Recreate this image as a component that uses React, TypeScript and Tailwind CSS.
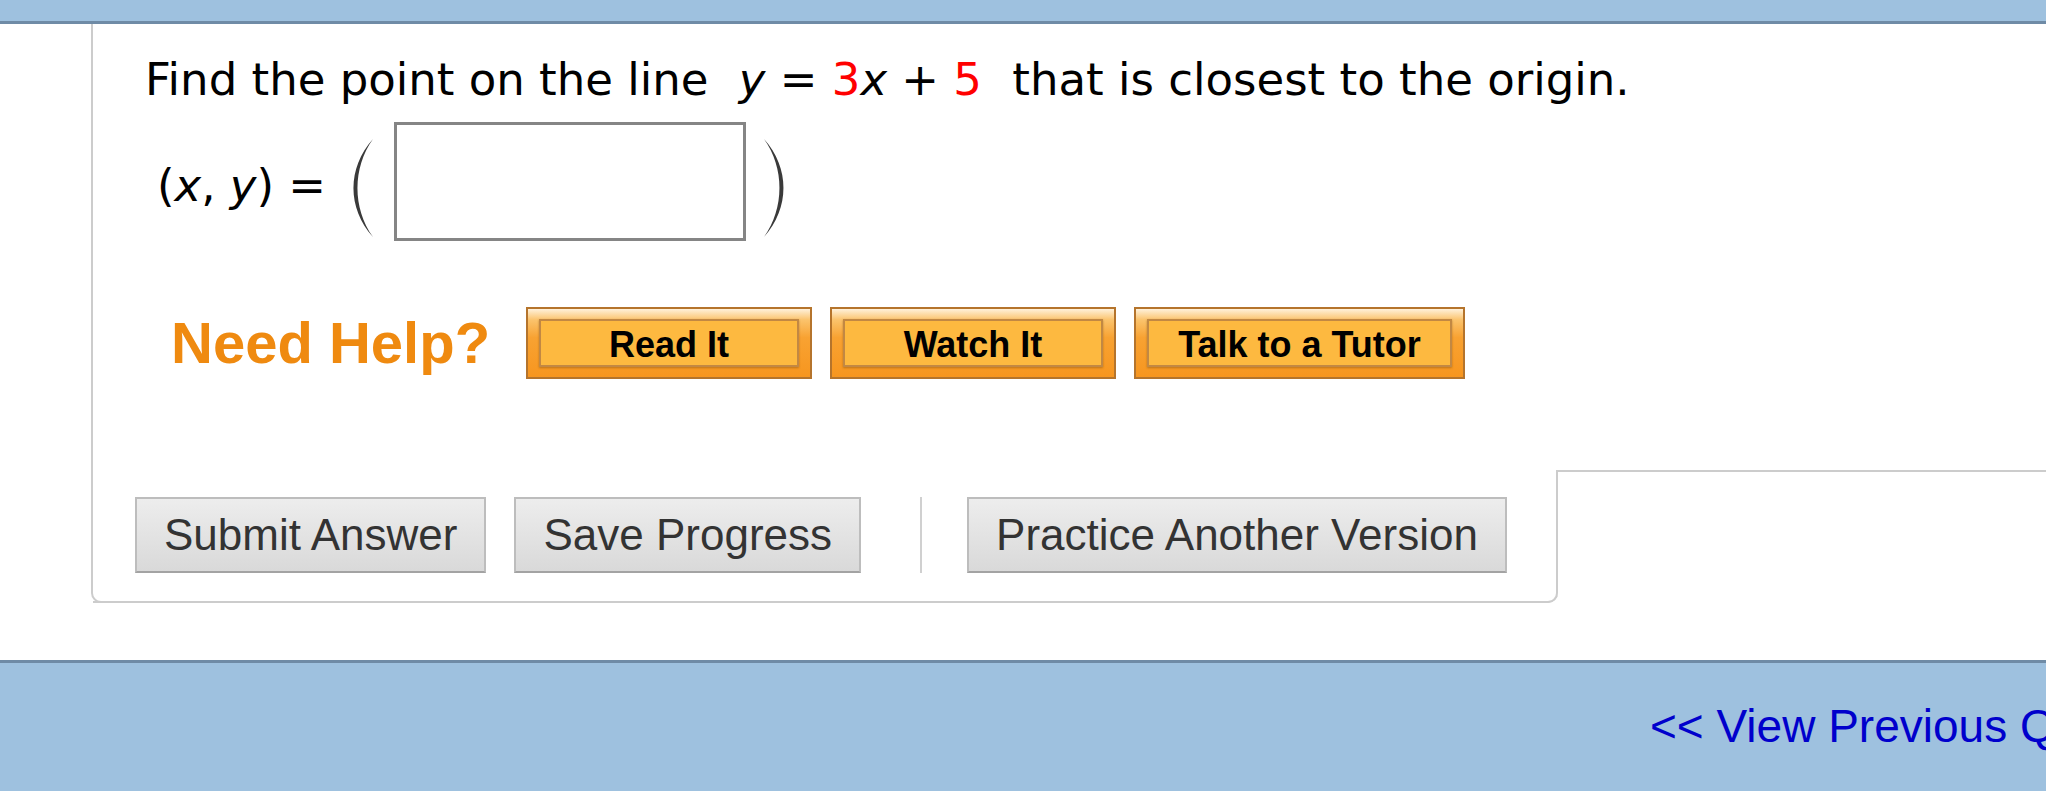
import React from "react";

const sans = "font-['Liberation_Sans',Arial,sans-serif]";
const verd = "font-['DejaVu_Sans',Verdana,sans-serif]";

function OrangeButton({ label, w }: { label: string; w: string }) {
  return (
    <button
      className={`${w} h-[72px] flex border-2 border-[#b5742c] bg-[linear-gradient(to_bottom,#fff1da_0%,#fbc36c_16%,#f8a232_42%,#f7961f_100%)] px-[11px] py-[10px]`}
    >
      <span
        className={`flex-1 flex items-center justify-center pt-[3px] border-2 border-[#c28843] bg-[#fdb940] shadow-[0_1px_2px_rgba(120,70,10,0.45)] ${sans} font-bold text-[36px] leading-none text-black`}
      >
        {label}
      </span>
    </button>
  );
}

function GrayButton({ label }: { label: string }) {
  return (
    <button
      className={`h-[76px] px-[27px] border-2 border-[#bdbdbd] border-b-[#a3a3a3] bg-[linear-gradient(to_bottom,#ededed,#d9d9d9)] ${sans} text-[44px] leading-none text-[#333333] whitespace-nowrap`}
    >
      {label}
    </button>
  );
}

function Paren({ right }: { right?: boolean }) {
  return (
    <svg width="23" height="100" viewBox="0 0 23 100" className="overflow-visible mt-[13px]">
      {right ? (
        <path d="M2 1 C 28 30 28 70 2 99 C 22.7 70 22.7 30 2 1 Z" fill="#3a3a3a" />
      ) : (
        <path d="M21 1 C -5 30 -5 70 21 99 C 0.3 70 0.3 30 21 1 Z" fill="#3a3a3a" />
      )}
    </svg>
  );
}

export default function App() {
  return (
    <div className="w-full min-h-[791px] bg-white flex flex-col overflow-hidden">
      <div className="h-[24px] shrink-0 bg-[#9ec1df] border-b-[3px] border-[#6f8ba6]" />
      <div className="flex">
        <div className="ml-[91px] w-[1467px] shrink-0 flex flex-col border-l-2 border-b-2 border-[#cccccc] rounded-b-[10px]">
          <div className="pl-[52px] pt-[30px] pb-[91px]">
            <p className={`${verd} text-[45px] leading-[52px] text-black whitespace-nowrap`}>
              Find the point on the line{" "}
              <span className="px-[16px]">
                <i>y</i> = <span className="text-[#ff0000]">3</span>
                <i>x</i> + <span className="text-[#ff0000]">5</span>
              </span>{" "}
              that is closest to the origin.
            </p>
            <div className="mt-[16px] pl-[12px] flex items-center">
              <span className={`w-[195px] mt-[8px] ${verd} text-[45px] leading-[52px] text-black whitespace-nowrap`}>
                (<i>x</i>, <i>y</i>) =
              </span>
              <Paren />
              <div className="ml-[19px] w-[352px] h-[119px] border-[3px] border-[#858585] bg-white" />
              <div className="ml-[16px] flex">
                <Paren right />
              </div>
            </div>
            <div className="mt-[66px] pl-[26px] flex items-center">
              <span className={`w-[355px] ${sans} font-bold text-[58px] leading-[64px] text-[#ef8a10] whitespace-nowrap`}>
                Need Help?
              </span>
              <div className="flex gap-[18px]">
                <OrangeButton label="Read It" w="w-[286px]" />
                <OrangeButton label="Watch It" w="w-[286px]" />
                <OrangeButton label="Talk to a Tutor" w="w-[331px]" />
              </div>
            </div>
          </div>
          <div className="-mb-[2px] pt-[27px] pb-[28px] pl-[42px] flex items-center border-r-2 border-b-2 border-[#cccccc] rounded-br-[10px]">
            <GrayButton label="Submit Answer" />
            <div className="ml-[28px]">
              <GrayButton label="Save Progress" />
            </div>
            <div className="ml-[59px] w-[2px] h-[76px] bg-[#d0d0d0]" />
            <div className="ml-[45px]">
              <GrayButton label="Practice Another Version" />
            </div>
          </div>
        </div>
        <div className="flex-1 mt-[446px] h-[2px] border-t-2 border-[#cccccc]" />
      </div>
      <div className="mt-[57px] h-[131px] shrink-0 border-t-[3px] border-[#6f8ba6] bg-[#9ec1df] pt-[38px] pl-[1650px] overflow-hidden">
        <span className={`${sans} text-[46px] leading-[50px] text-[#0000cc] whitespace-nowrap`}>
          &lt;&lt; View Previous Question
        </span>
      </div>
    </div>
  );
}
